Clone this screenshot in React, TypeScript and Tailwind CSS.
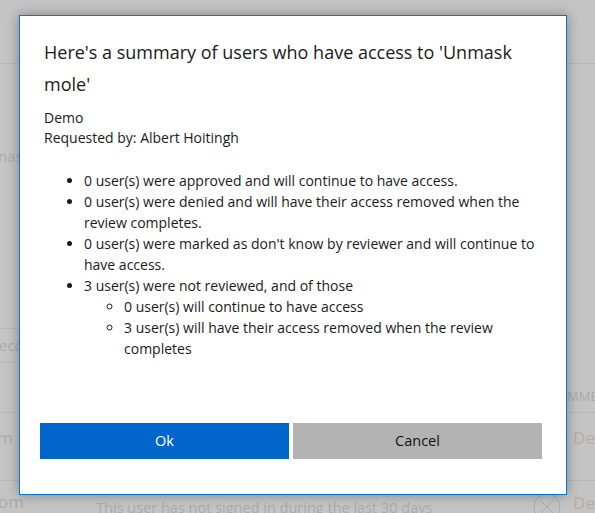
import React from "react";

const bullets = [
  "0 user(s) were approved and will continue to have access.",
  "0 user(s) were denied and will have their access removed when the review completes.",
  "0 user(s) were marked as don't know by reviewer and will continue to have access.",
];

export default function App() {
  return (
    <div className="relative h-[513px] w-[595px] overflow-hidden bg-[#c4c4c4] font-['Open_Sans',sans-serif] text-[#ababab]">
      {/* Page behind the overlay */}
      <div className="flex flex-col">
        <div className="h-[64px] border-b border-[#b9b9b9]" />
        <div className="flex h-[349px] border-b border-[#b9b9b9]">
          <div className="flex w-[40px] flex-col overflow-hidden whitespace-nowrap">
            <div className="h-[265px] border-b border-[#b9b9b9] pt-[82px] text-[15px] leading-[20px]">
              <span className="-ml-[2px]">nask mole</span>
            </div>
            <div className="flex h-[34px] items-center border-b border-[#b9b9b9] text-[15px]">
              <span className="-ml-[1px]">ecommendations</span>
            </div>
          </div>
          <div className="flex-1" />
          <div className="flex w-[28px] flex-col justify-end overflow-hidden pb-[8px] text-[13px] leading-[16px] whitespace-nowrap">
            MMENTS
          </div>
        </div>
        <div className="flex h-[68px] border-b border-[#b9b9b9] pt-[15px] text-[17px] leading-[20px]">
          <div className="w-[97px] overflow-hidden whitespace-nowrap">
            <span className="-ml-[3px]">m</span>
          </div>
          <div className="w-[441px]" />
          <div className="flex-1 pl-[40px] text-[#bca9a9]">De</div>
        </div>
        <div className="flex pt-[11px] leading-[20px]">
          <div className="w-[97px] overflow-hidden text-[17px] whitespace-nowrap">
            <span className="-ml-[2px]">om</span>
          </div>
          <div className="w-[441px] pt-[6px] text-[14.5px] whitespace-nowrap">
            This user has not signed in during the last 30 days
          </div>
          <div className="flex flex-1 items-start gap-[12px] pt-[1px] text-[17px] text-[#bca9a9]">
            <svg width="28" height="28" viewBox="0 0 28 28" fill="none" className="shrink-0">
              <circle cx="14" cy="14" r="13" stroke="#ababab" strokeWidth="1" />
              <path d="M8 8L20 20M20 8L8 20" stroke="#ababab" strokeWidth="1" />
            </svg>
            <span>De</span>
          </div>
        </div>
      </div>

      {/* Dialog */}
      <div className="absolute left-[19px] top-[15px] flex h-[480px] w-[548px] flex-col border border-[#0078d7] bg-white shadow-[0_0_12px_rgba(0,0,0,0.35)]">
        <div className="px-[24px] pt-[20px] text-[#1a1a1a]">
          <h2 className="text-[18px] leading-[32px]">
            Here's a summary of users who have access to 'Unmask mole'
          </h2>
          <p className="mt-[8px] text-[14px] leading-[20px]">
            Demo
            <br />
            Requested by: Albert Hoitingh
          </p>
          <ul className="mt-[22px] list-disc pl-[40px] text-[14px] leading-[21px]">
            {bullets.map((b) => (
              <li key={b}>{b}</li>
            ))}
            <li>
              3 user(s) were not reviewed, and of those
              <ul className="list-[circle] pl-[40px]">
                <li>0 user(s) will continue to have access</li>
                <li>3 user(s) will have their access removed when the review completes</li>
              </ul>
            </li>
          </ul>
        </div>

        <div className="mt-auto flex gap-[4px] pb-[35px] pl-[20px] pr-[24px] text-[14.5px]">
          <button className="h-[36px] flex-1 bg-[#0066cc] text-white">Ok</button>
          <button className="h-[36px] flex-1 bg-[#b3b3b3] text-[#111]">Cancel</button>
        </div>
      </div>
    </div>
  );
}
